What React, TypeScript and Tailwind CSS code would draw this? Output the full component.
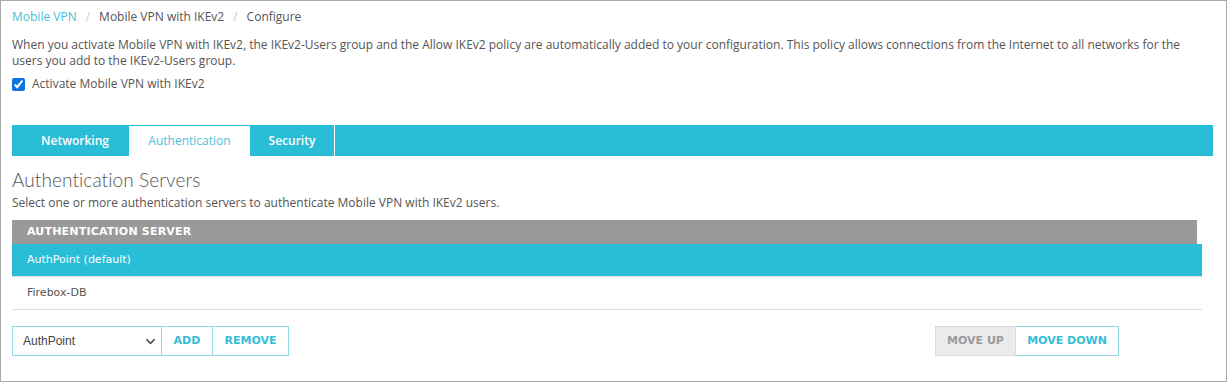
import { ChevronDown } from "lucide-react";

const servers = [
    { name: "AuthPoint (default)", selected: true },
    { name: "Firebox-DB", selected: false },
];

const tabs = ["Networking", "Authentication", "Security"];

export default function App() {
    return (
        <div className="w-[1227px] h-[382px] border border-[#a9a9a9] bg-white pl-[11px] pr-[13px] font-['Open_Sans',sans-serif] text-[#555] overflow-hidden">
            {/* Breadcrumb */}
            <div className="flex items-center gap-[9px] pt-[7px] text-[12px] leading-[18px]">
                <span className="text-[#3fbfd9]">Mobile VPN</span>
                <span className="text-[#ccc]">/</span>
                <span>Mobile VPN with IKEv2</span>
                <span className="text-[#ccc]">/</span>
                <span>Configure</span>
            </div>

            <p className="mt-[11px] text-[12px] leading-[16px] pr-[6px]">
                When you activate Mobile VPN with IKEv2, the IKEv2-Users group and the Allow IKEv2 policy are automatically added to your configuration. This policy allows connections from the Internet to all networks for the users you add to the IKEv2-Users group.
            </p>

            <label className="flex items-center gap-[7px] mt-[7px] text-[12px] leading-[16px]">
                <input type="checkbox" defaultChecked className="w-[13px] h-[13px] m-0 accent-[#0a75e0]" />
                Activate Mobile VPN with IKEv2
            </label>

            {/* Tabs */}
            <div className="mt-[33px] flex h-[31px] bg-[#2abdd8]">
                {tabs.map((t) => (
                    <div
                        key={t}
                        className={
                            t === "Authentication"
                                ? "flex items-center justify-center w-[122px] mt-[1px] bg-white text-[#4cc3dc] text-[12px] border-l border-[#2abdd8]"
                                : "flex items-center justify-center text-white text-[12px] font-semibold border-r border-white " +
                                  (t === "Networking" ? "w-[116px] pl-[10px] border-r-0" : "w-[85px]")
                        }
                    >
                        {t}
                    </div>
                ))}
            </div>

            <h2 className="mt-[12px] text-[19px] leading-[24px] font-light text-[#555] font-['Lato',sans-serif] tracking-[0.1px]">
                Authentication Servers
            </h2>
            <p className="mt-[3px] text-[12px] leading-[16px]">
                Select one or more authentication servers to authenticate Mobile VPN with IKEv2 users.
            </p>

            {/* Table */}
            <div className="mt-[9px] w-[1190px] font-['DejaVu_Sans',Verdana,sans-serif]">
                <div className="w-[1185px] h-[24px] bg-[#999] flex items-center pl-[15px] text-white text-[11px] font-bold tracking-[0.2px]">
                    AUTHENTICATION SERVER
                </div>
                {servers.map((s) => (
                    <div
                        key={s.name}
                        className={
                            s.selected
                                ? "h-[33px] bg-[#2abdd8] text-white text-[11px] flex items-center pl-[15px] border-b border-[#dedede]"
                                : "h-[33px] text-[#555] text-[11px] flex items-center pl-[15px] border-b border-[#dedede]"
                        }
                    >
                        {s.name}
                    </div>
                ))}
            </div>

            {/* Controls */}
            <div className="mt-[16px] flex items-center justify-between w-[1107px]">
                <div className="flex h-[30px]">
                    <div className="w-[150px] border border-[#8fd9e8] flex items-center justify-between pl-[10px] pr-[3px] font-['Liberation_Sans',Arial,sans-serif] text-[12px] text-[#444]">
                        AuthPoint
                        <ChevronDown size={15} strokeWidth={2.5} className="text-[#555]" />
                    </div>
                    <button className="w-[51px] border border-l-0 border-[#8fd9e8] text-[#37bdd7] text-[11px] font-bold font-['DejaVu_Sans',Verdana,sans-serif]">
                        ADD
                    </button>
                    <button className="w-[76px] border border-l-0 border-[#8fd9e8] text-[#37bdd7] text-[11px] font-bold font-['DejaVu_Sans',Verdana,sans-serif]">
                        REMOVE
                    </button>
                </div>
                <div className="flex h-[30px] font-['DejaVu_Sans',Verdana,sans-serif] text-[11px] font-bold">
                    <button className="w-[81px] bg-[#ebebeb] border border-[#dcdcdc] text-[#9a9a9a]">MOVE UP</button>
                    <button className="w-[103px] border border-l-0 border-[#8fd9e8] text-[#37bdd7]">MOVE DOWN</button>
                </div>
            </div>
        </div>
    );
}
